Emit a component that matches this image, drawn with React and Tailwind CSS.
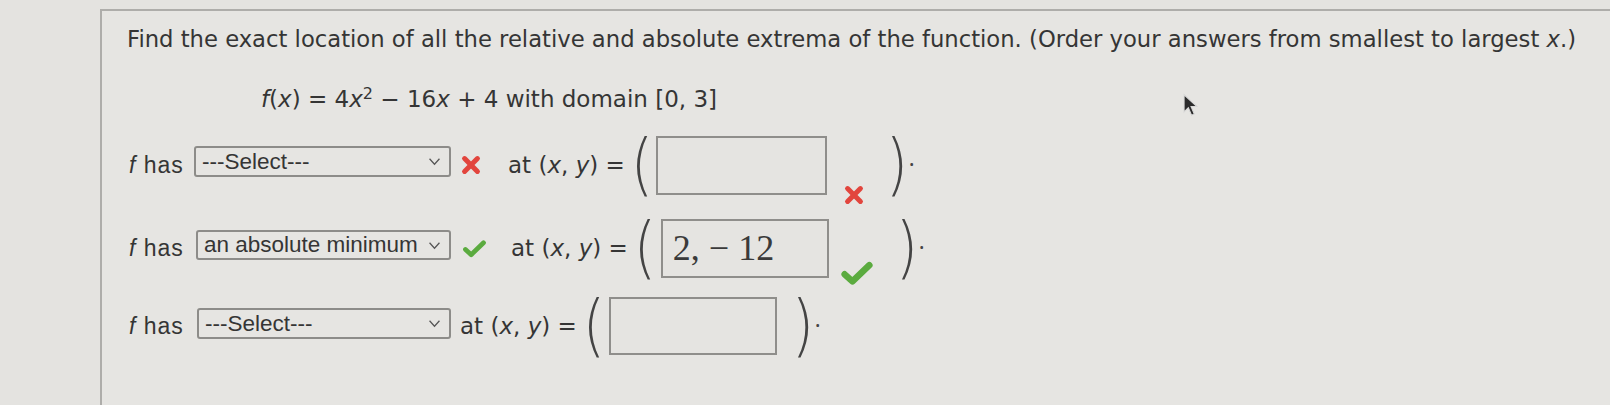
const ink = 'text-[#353535]'

const RedX = ({ className = '' }) => (
  <svg viewBox="0 0 24 24" className={className}>
    <path d="M5 5 L19 19 M19 5 L5 19" stroke="#e2453d" strokeWidth="5.5" strokeLinecap="round" fill="none" />
  </svg>
)

const Check = ({ className = '' }) => (
  <svg viewBox="0 0 26 20" className={className}>
    <path d="M3.5 11 L9.5 16.5 L22.5 4" stroke="#5bab3f" strokeWidth="5" strokeLinecap="round" strokeLinejoin="round" fill="none" />
  </svg>
)

const Chevron = () => (
  <svg viewBox="0 0 14 10" className="w-[13px] h-[9px]">
    <path d="M1.5 2 L7 8 L12.5 2" stroke="#555" strokeWidth="1.4" fill="none" />
  </svg>
)

const Select = ({ value, className = '' }) => (
  <div className={`flex items-center justify-between border-2 border-[#8d8c89] rounded-[3px] bg-[#e6e5e2] pl-[6px] pr-[8px] font-['Liberation_Sans',Arial,sans-serif] text-[22.5px] ${ink} ${className}`}>
    <span>{value}</span>
    <Chevron />
  </div>
)

const Paren = ({ ch, className = '' }) => (
  <span className={`inline-block w-[20px] text-center font-['DejaVu_Sans',sans-serif] font-extralight text-[44px] leading-none scale-y-[1.55] scale-x-[1.3] text-[#444] ${className}`}>{ch}</span>
)

const Box = ({ children, className = '' }) => (
  <div className={`border-2 border-[#8f8e8b] bg-[#e5e4e1] flex items-center ${className}`}>{children}</div>
)

const AtXY = ({ className = '' }) => (
  <span className={`font-['DejaVu_Sans',sans-serif] text-[23px] whitespace-nowrap ${ink} ${className}`}>
    at (<i>x</i>, <i>y</i>) =
  </span>
)

const FHas = ({ className = '' }) => (
  <span className={`shrink-0 pl-[6px] font-['Liberation_Sans',Arial,sans-serif] text-[23px] tracking-[1px] whitespace-nowrap ${ink} ${className}`}>
    <i>f</i> has
  </span>
)

const Dot = () => <span className="text-[22px] -mt-[16px] ml-[2px] text-[#444]">.</span>

export default function App() {
  return (
    <div className="w-[1610px] h-[405px] overflow-hidden bg-[#e4e3e0] pt-[9px] pl-[100px]">
      <div className="h-[420px] border-t-2 border-l-2 border-[#aeadaa] bg-[#e6e5e2] pl-[21px] pt-[13px] relative">
        <p className={`ml-[4px] font-['DejaVu_Sans',Verdana,sans-serif] text-[22.7px] leading-[30px] whitespace-nowrap ${ink}`}>
          Find the exact location of all the relative and absolute extrema of the function. (Order your answers from smallest to largest <i>x</i>.)
        </p>
        <p className={`mt-[30px] ml-[138px] font-['DejaVu_Sans',Verdana,sans-serif] text-[23px] leading-[30px] whitespace-nowrap ${ink}`}>
          <i>f</i>(<i>x</i>) = 4<i>x</i><sup className="text-[16px]">2</sup> − 16<i>x</i> + 4 with domain [0, 3]
        </p>

        {/* row 1 */}
        <div className="flex items-center mt-[19px] h-[64px]">
          <FHas className="w-[71px]" />
          <Select value="---Select---" className="w-[257px] h-[31px] -mt-[7px]" />
          <RedX className="w-[22px] h-[22px] ml-[9px]" />
          <AtXY className="ml-[26px]" />
          <Paren ch="(" className="ml-[7px]" />
          <Box className="w-[171px] h-[59px] ml-[4px]" />
          <RedX className="w-[22px] h-[22px] ml-[16px] mt-[60px]" />
          <Paren ch=")" className="ml-[22px]" />
          <Dot />
        </div>

        {/* row 2 */}
        <div className="flex items-center mt-[19px] h-[64px]">
          <FHas className="w-[73px]" />
          <Select value="an absolute minimum" className="w-[255px] h-[30px] -mt-[6px]" />
          <Check className="w-[25px] h-[19px] ml-[11px]" />
          <AtXY className="ml-[24px]" />
          <Paren ch="(" className="ml-[7px]" />
          <Box className="w-[168px] h-[59px] ml-[6px] pl-[10px]">
            <span className="font-['Liberation_Serif','Times_New_Roman',serif] text-[36px] text-[#3a3a3a]">2, − 12</span>
          </Box>
          <Check className="w-[36px] h-[26px] ml-[10px] mt-[50px]" />
          <Paren ch=")" className="ml-[22px]" />
          <Dot />
        </div>

        {/* row 3 */}
        <div className="flex items-center mt-[14px] h-[64px]">
          <FHas className="w-[74px]" />
          <Select value="---Select---" className="w-[254px] h-[31px] -mt-[5px]" />
          <AtXY className="ml-[9px]" />
          <Paren ch="(" className="ml-[7px]" />
          <Box className="w-[168px] h-[58px] ml-[5px]" />
          <Paren ch=")" className="ml-[16px]" />
          <Dot />
        </div>

        {/* mouse pointer */}
        <svg viewBox="0 0 14 22" className="absolute left-[1081px] top-[82px] w-[15px] h-[25px]">
          <path d="M1 1 L1 17 L5 13 L8 20 L10.5 19 L7.5 12 L13 12 Z" fill="#2b2b2b" stroke="#d8d8d8" strokeWidth="1" />
        </svg>
      </div>
    </div>
  )
}
